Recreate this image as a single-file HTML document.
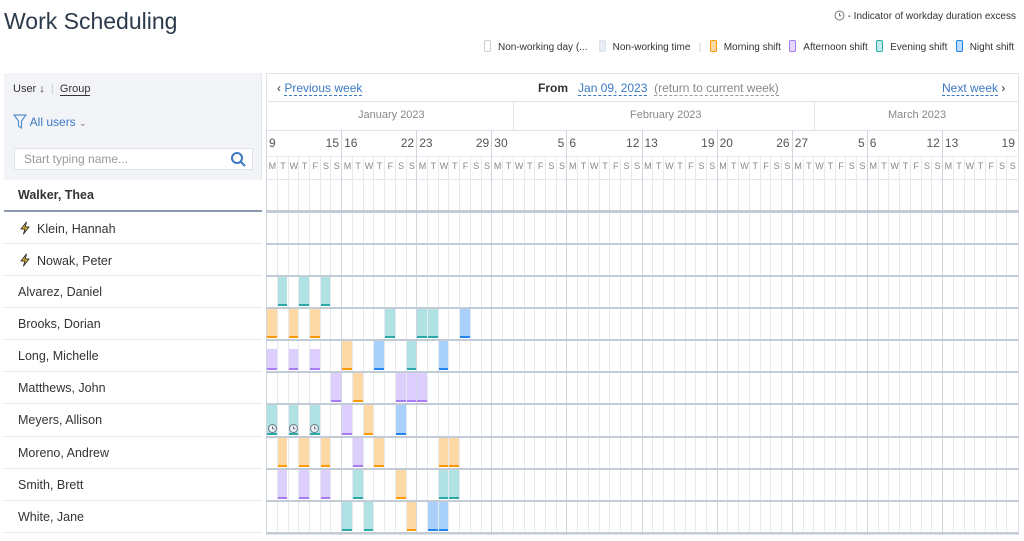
<!DOCTYPE html>
<html><head><meta charset="utf-8"><style>
*{box-sizing:border-box;margin:0;padding:0}
body{width:1024px;height:541px;background:#fff;font-family:"Liberation Sans",sans-serif;position:relative;overflow:hidden;color:#333}
.a{position:absolute}
.t{font-size:11px;color:#333;white-space:nowrap}
.lg{display:inline-block;width:7px;height:12px;border:1px solid;border-radius:2px;vertical-align:-2px;margin-right:7px}
.link{color:#3b78c4;border-bottom:1px dashed #3b78c4}
.name{position:absolute;left:18px;font-size:12.5px;color:#333}
.row{position:absolute;left:4px;width:258px;background:#fff;border-bottom:1px solid #e8ecf2}
</style></head><body>
<div class="a" style="left:4px;top:8px;font-size:23px;color:#2c3a4b">Work Scheduling</div>
<div class="a t" style="right:8px;top:10px;font-size:10px"><svg width="11" height="11" viewBox="0 0 11 11" style="vertical-align:-2px"><circle cx="5.5" cy="5.5" r="4.5" fill="none" stroke="#777"/><path d="M5.5 3v2.7h2" fill="none" stroke="#777"/></svg> - Indicator of workday duration excess</div>
<div class="a t" style="left:484px;top:40px;font-size:10px">
<span class="lg" style="border-color:#c9cfd8;background:#fff"></span>Non-working day (...&nbsp;&nbsp;&nbsp;&nbsp;<span class="lg" style="border-color:#dde3ec;background:#e9eef5"></span>Non-working time&nbsp;&nbsp;&nbsp;<span style="color:#ccc">|</span>&nbsp;&nbsp;&nbsp;<span class="lg" style="border-color:#f90;background:#fdd9a5"></span>Morning shift&nbsp;&nbsp;&nbsp;<span class="lg" style="border-color:#a77bf3;background:#e4dafd"></span>Afternoon shift&nbsp;&nbsp;&nbsp;<span class="lg" style="border-color:#2aa9aa;background:#c4ebec"></span>Evening shift&nbsp;&nbsp;&nbsp;<span class="lg" style="border-color:#1f86f0;background:#bcdcfd"></span>Night shift</div>

<div class="a" style="left:4px;top:73px;width:258px;height:107px;background:#f2f4f8;border-right:1px solid #e3e7ee"></div>
<div class="a t" style="left:13px;top:83px">User ↓ <span style="color:#ccc">&nbsp;|&nbsp;</span> <span style="border-bottom:1px solid #333">Group</span></div>
<div class="a t" style="left:13px;top:114px;font-size:12px;color:#3b78c4"><svg width="14" height="16" viewBox="0 0 14 16" style="vertical-align:-4px"><path d="M1 1h12L8.5 7v7l-3-2V7z" fill="none" stroke="#5b8fd0" stroke-width="1.2"/></svg> All users <span style="font-size:9px;color:#777">⌄</span></div>
<div class="a" style="left:14px;top:148px;width:239px;height:22px;background:#fff;border:1px solid #dfe3ea"></div>
<div class="a t" style="left:24px;top:152px;font-size:12px;color:#999">Start typing name...</div>
<svg class="a" style="left:230px;top:151px" width="16" height="16"><circle cx="7" cy="7" r="5" fill="none" stroke="#3b78c4" stroke-width="2"/><path d="M11 11l4 4" stroke="#3b78c4" stroke-width="2"/></svg>

<div class="row" style="top:180px;height:32px;border-bottom:2px solid #8a99ab"></div>
<div class="name" style="top:188px;font-weight:bold">Walker, Thea</div>
<div id="rows"></div>

<div class="a" style="left:266px;top:73px;width:753px;height:462px;border:1px solid #dfe3ea"></div>
<div class="a" style="left:266px;top:101px;width:753px;height:1px;background:#dfe3ea"></div>
<div class="a" style="left:266px;top:130px;width:753px;height:1px;background:#dfe3ea"></div>
<div class="a" style="left:266px;top:156px;width:753px;height:1px;background:#e6e9ee"></div>
<div class="a" style="left:266px;top:179px;width:753px;height:1px;background:#dfe3ea"></div>
<div class="a t" style="left:277px;top:81px;font-size:12px">‹ <span class="link">Previous week</span></div>
<div class="a t" style="left:538px;top:81px;font-size:12px"><b>From</b>&nbsp;&nbsp; <span class="link">Jan 09, 2023</span>&nbsp; <span style="color:#888;border-bottom:1px dashed #999">(return to current week)</span></div>
<div class="a t" style="left:942px;top:81px;font-size:12px"><span class="link">Next week</span> ›</div>
<div class="a" style="left:513px;top:101px;width:1px;height:29px;background:#dfe3ea"></div>
<div class="a" style="left:814px;top:101px;width:1px;height:29px;background:#dfe3ea"></div>
<div class="a t" style="left:358px;top:109px;color:#888">January 2023</div>
<div class="a t" style="left:630px;top:109px;color:#888">February 2023</div>
<div class="a t" style="left:888px;top:109px;color:#888">March 2023</div>
<div id="g"></div>
<script>
var L=267,W=10.73,g=document.getElementById('g'),h='';
var rt=[212,244,276,308,340,372,404,437,469,501,533];
var names=['⚡ Klein, Hannah','⚡ Nowak, Peter','Alvarez, Daniel','Brooks, Dorian','Long, Michelle','Matthews, John','Meyers, Allison','Moreno, Andrew','Smith, Brett','White, Jane'];
var bolt='<svg width="14" height="14" viewBox="0 0 14 14" style="vertical-align:-2px;margin-right:5px"><path d="M8.5 1L3 8h4l-1.5 5L11 6H7z" fill="#f5c02a" stroke="#333" stroke-width="1" stroke-linejoin="round"/></svg>';
var r='';
for(var i=0;i<10;i++){r+='<div class="row" style="top:'+rt[i]+'px;height:'+(rt[i+1]-rt[i])+'px"></div><div class="name" style="top:'+(rt[i]+9)+'px">'+names[i].replace('⚡ ',bolt)+'</div>';}
document.getElementById('rows').innerHTML=r;
var dn=[[9,15],[16,22],[23,29],[30,5],[6,12],[13,19],[20,26],[27,5],[6,12],[13,19]];
var wl='MTWTFSS';
for(var d=0;d<70;d++){var x=L+d*W;var wk=d%7==0;
 h+='<div class="a" style="left:'+(x-1).toFixed(1)+'px;top:'+(wk?130:156)+'px;width:1px;height:'+(wk?405:379)+'px;background:'+(wk?'#cfd6df':'#e6e9ee')+'"></div>';
 h+='<div class="a" style="left:'+x.toFixed(1)+'px;top:161px;width:'+W+'px;text-align:center;font-size:9px;color:#888">'+wl[d%7]+'</div>';}
for(var w=0;w<10;w++){var x=L+w*75.1;h+='<div class="a t" style="left:'+(x+2)+'px;top:136px;font-size:12px;color:#555">'+dn[w][0]+'</div><div class="a t" style="left:'+(x+48)+'px;top:136px;width:24px;text-align:right;font-size:12px;color:#555">'+dn[w][1]+'</div>';}
var rb=[211].concat(rt.slice(1));
for(var i=0;i<rb.length;i++){h+='<div class="a" style="left:266px;top:'+(rb[i]-1)+'px;width:753px;height:'+(i==0?3:2)+'px;background:#c3cbd6"></div>';}
var C={o:['#fdd9a5','#f90'],p:['#dccffd','#a77bf3'],t:['#b0e2e3','#2aa9aa'],b:['#a8d0fb','#1f86f0']};
var B=[[],[],[[1,'t'],[3,'t'],[5,'t']],
[[0,'o'],[2,'o'],[4,'o'],[11,'t'],[14,'t'],[15,'t'],[18,'b']],
[[0,'p',8],[2,'p',8],[4,'p',8],[7,'o'],[10,'b'],[13,'t'],[16,'b']],
[[6,'p'],[8,'o'],[12,'p'],[13,'p'],[14,'p']],
[[0,'t',0,1],[2,'t',0,1],[4,'t',0,1],[7,'p'],[9,'o'],[12,'b']],
[[1,'o'],[3,'o'],[5,'o'],[8,'p'],[10,'o'],[16,'o'],[17,'o']],
[[1,'p'],[3,'p'],[5,'p'],[8,'t'],[12,'o'],[16,'t'],[17,'t']],
[[7,'t'],[9,'t'],[13,'o'],[15,'b'],[16,'b']]];
for(var i=0;i<10;i++)B[i].forEach(function(b){var x=L+b[0]*W,top=rt[i]+1+(b[2]||0),bot=rt[i+1]-2,c=C[b[1]];
 h+='<div class="a" style="left:'+x.toFixed(1)+'px;top:'+top+'px;width:'+(W-1)+'px;height:'+(bot-top)+'px;background:'+c[0]+';border-bottom:2px solid '+c[1]+'"></div>';
 if(b[3])h+='<svg class="a" style="left:'+(x+0.5).toFixed(1)+'px;top:'+(bot-11)+'px" width="9" height="9" viewBox="0 0 9 9"><circle cx="4.5" cy="4.5" r="4" fill="#eef2f6" stroke="#6b7785"/><path d="M4.5 2.3v2.4h1.8" fill="none" stroke="#6b7785"/></svg>';});
g.innerHTML=h;
</script>
</body></html>
